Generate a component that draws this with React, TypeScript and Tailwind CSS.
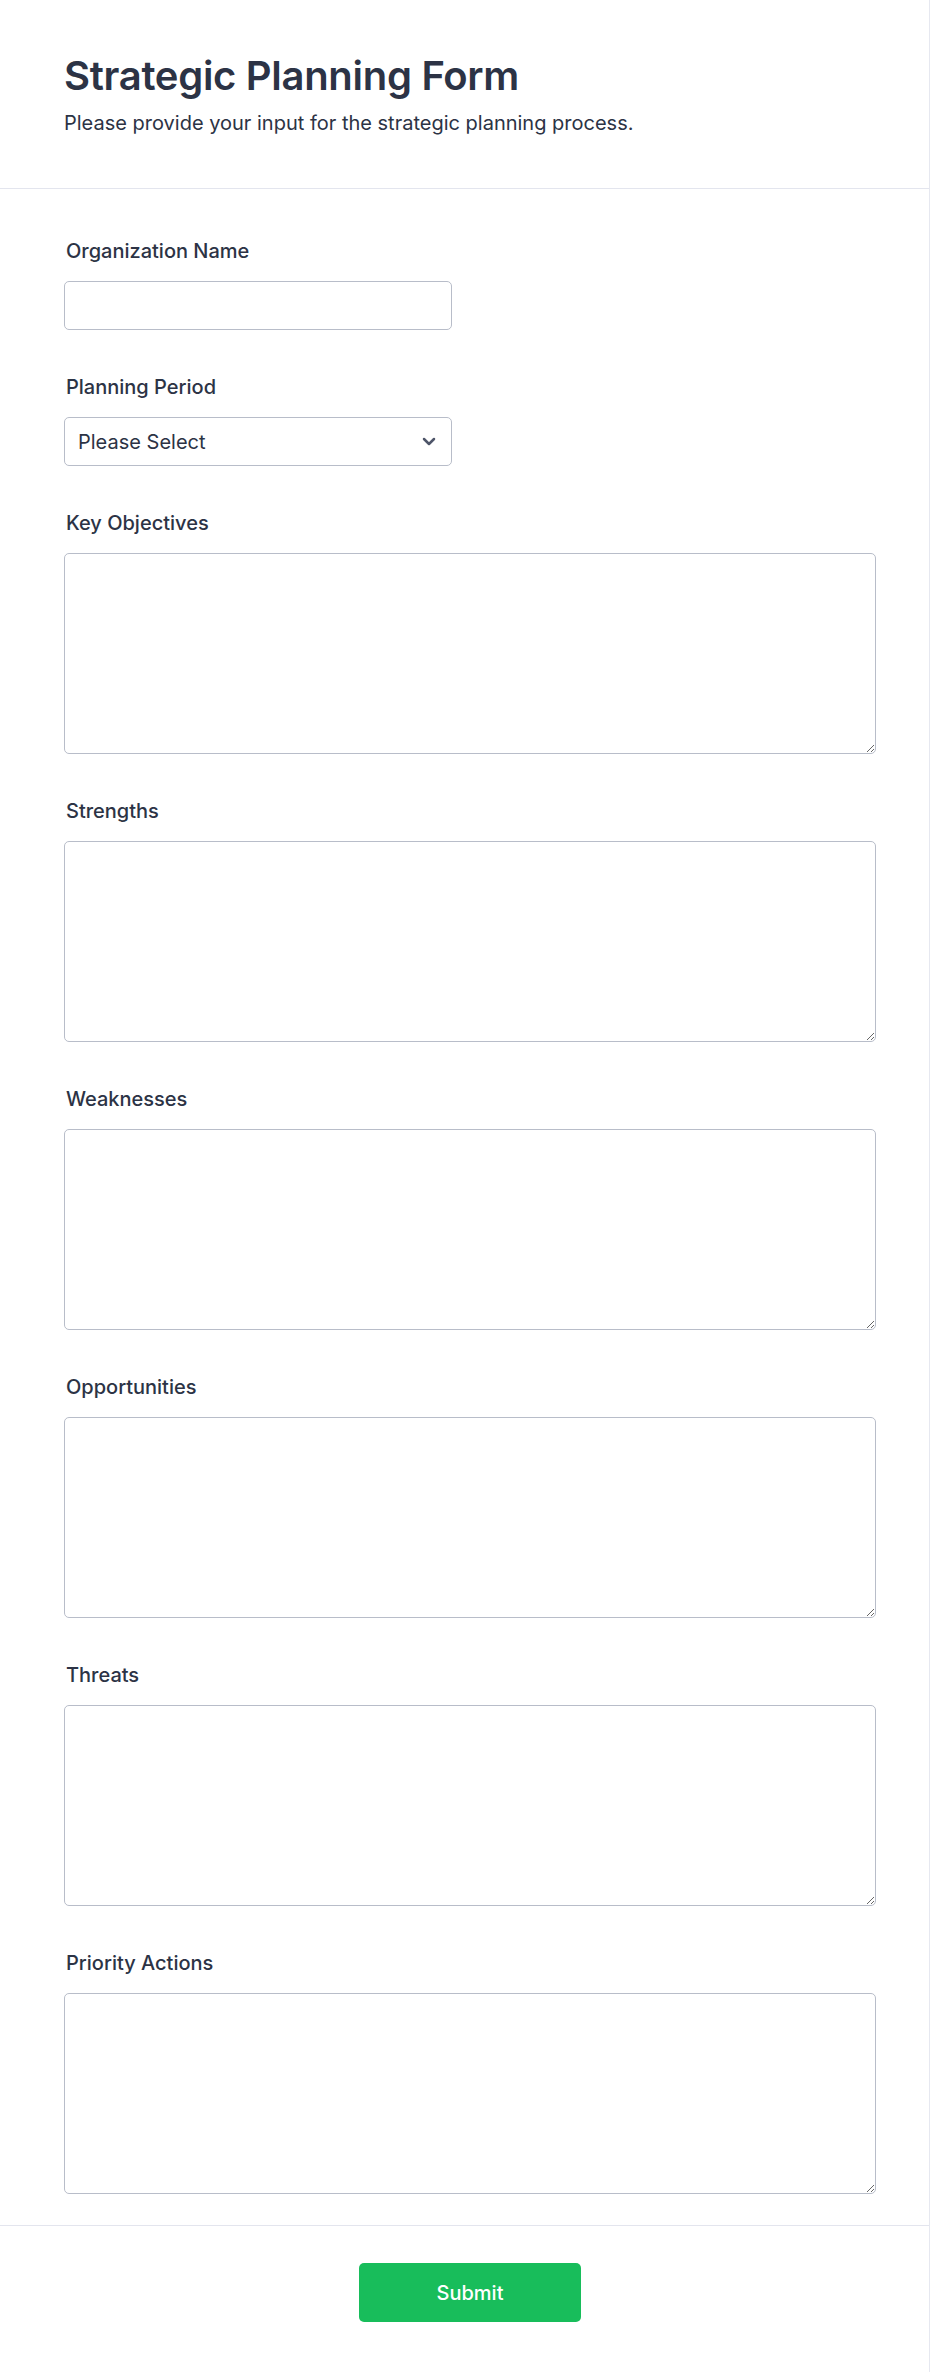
import React from "react";

const fields = [
  "Key Objectives",
  "Strengths",
  "Weaknesses",
  "Opportunities",
  "Threats",
  "Priority Actions",
];

function Label({ children }: { children: React.ReactNode }) {
  return (
    <label className="block pl-[2px] text-[20px] leading-[30px] font-medium text-[#2c3345] mb-[15px]">
      {children}
    </label>
  );
}

export default function App() {
  return (
    <div
      className="w-[930px] overflow-hidden bg-white border-r border-[#e6e8f0]"
      style={{ fontFamily: "Inter, 'Noto Sans', sans-serif" }}
    >
      <div className="w-[940px]">
        <header className="px-16 pt-[52px] pb-[50px] border-b border-[#e3e5ee]">
          <h1 className="text-[40px] leading-[48px] font-semibold text-[#2c3345] tracking-[-0.3px]">
            Strategic Planning Form
          </h1>
          <p className="mt-[8px] text-[20px] leading-[30px] text-[#2c3345]">
            Please provide your input for the strategic planning process.
          </p>
        </header>

        <main className="px-16 pt-[47px] pb-[31px] flex flex-col gap-[42px] border-b border-[#e3e5ee]">
          <div>
            <Label>Organization Name</Label>
            <input
              type="text"
              className="block w-[388px] h-[49px] rounded-[5px] border border-[#b8bdc9] bg-white px-[14px] text-[20px] text-[#2c3345] outline-none"
            />
          </div>
          <div>
            <Label>Planning Period</Label>
            <div className="relative w-[388px]">
              <select className="block w-full h-[49px] appearance-none rounded-[5px] border border-[#b8bdc9] bg-white pl-[13px] pr-[40px] text-[20px] text-[#2c3345] outline-none">
                <option>Please Select</option>
              </select>
              <svg
                className="absolute right-[16px] top-[20px] pointer-events-none"
                width="14"
                height="9"
                viewBox="0 0 14 9"
                fill="none"
              >
                <path
                  d="M2 2L7 7L12 2"
                  stroke="#4e5569"
                  strokeWidth="2.5"
                  strokeLinecap="round"
                  strokeLinejoin="round"
                />
              </svg>
            </div>
          </div>
          {fields.map((f) => (
            <div key={f}>
              <Label>{f}</Label>
              <textarea className="block w-full h-[201px] rounded-[5px] border border-[#b8bdc9] bg-white px-[14px] py-[10px] text-[20px] text-[#2c3345] outline-none" />
            </div>
          ))}
        </main>

        <footer className="flex justify-center pt-[37px] pb-[50px]">
          <button className="w-[222px] h-[59px] rounded-[5px] bg-[#18bd5b] text-white text-[20px] font-medium">
            Submit
          </button>
        </footer>
      </div>
    </div>
  );
}
